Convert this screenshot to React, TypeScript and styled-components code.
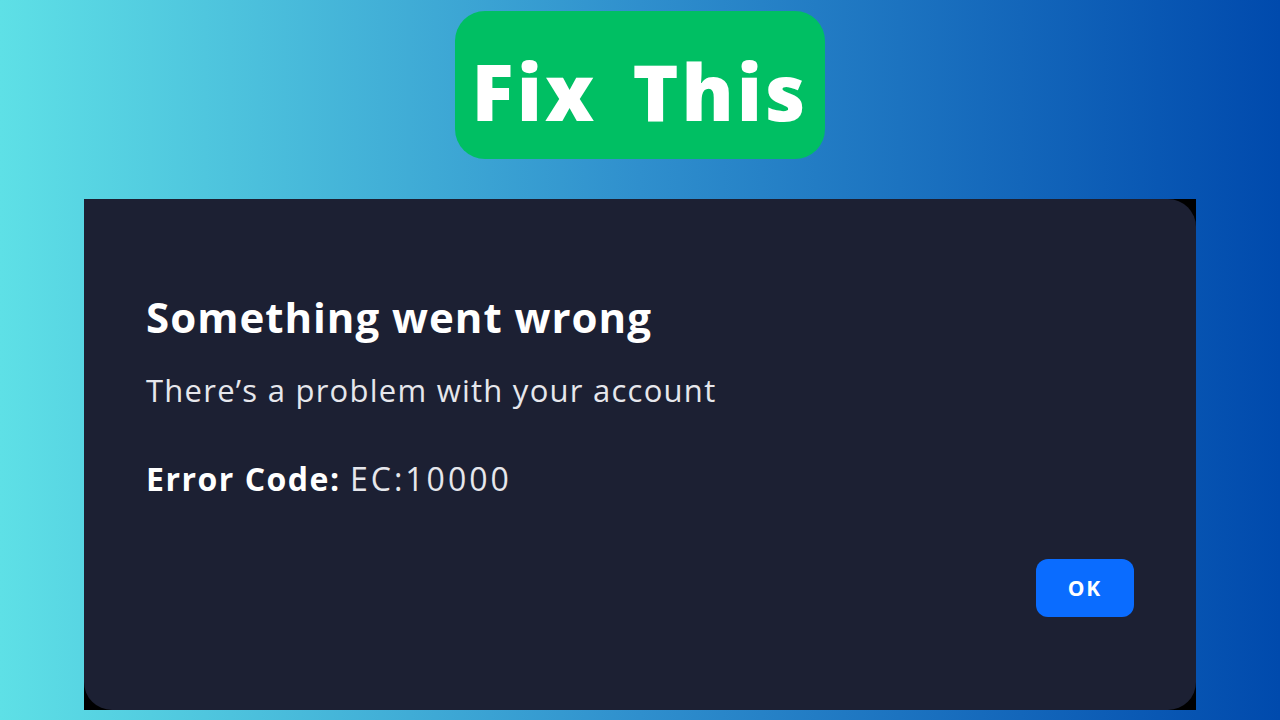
import styled, { createGlobalStyle } from 'styled-components';

const GlobalStyle = createGlobalStyle`
  html, body {
    margin: 0;
    padding: 0;
  }
  body {
    width: 1280px;
    height: 720px;
    overflow: hidden;
    background: linear-gradient(90deg, #5ee0e6 0%, #2f8fcd 50%, #004aad 100%);
    font-family: 'Open Sans', 'Noto Sans', sans-serif;
  }
`;

const Page = styled.div`
  width: 1280px;
  height: 720px;
  display: flex;
  flex-direction: column;
  align-items: center;
  padding-top: 11px;
  box-sizing: border-box;
`;

const Badge = styled.div`
  width: 370px;
  height: 148px;
  box-sizing: border-box;
  padding-top: 12px;
  border-radius: 30px;
  background: #00bf63;
  display: flex;
  align-items: center;
  justify-content: center;
  color: #ffffff;
  font-family: 'Open Sans', 'Noto Sans', sans-serif;
  font-weight: 800;
  font-size: 78px;
  letter-spacing: 3px;
  word-spacing: 12px;
`;

const Frame = styled.div`
  margin-top: 40px;
  width: 1112px;
  height: 511px;
  background: #000000;
  display: flex;
`;

const Panel = styled.div`
  flex: 1;
  background: #1c2033;
  border-radius: 0 28px 28px 28px;
  padding: 92px 62px 0 62px;
  display: flex;
  flex-direction: column;
`;

const Title = styled.h1`
  margin: 0;
  color: #ffffff;
  font-size: 42px;
  font-weight: 700;
  line-height: 52px;
  letter-spacing: 1px;
`;

const Message = styled.p`
  margin: 27px 0 0;
  color: #e6e7ec;
  font-size: 31px;
  font-weight: 400;
  line-height: 40px;
  letter-spacing: 1.25px;
`;

const Code = styled.p`
  margin: 49px 0 0;
  color: #e6e7ec;
  font-size: 32px;
  line-height: 40px;
  letter-spacing: 1px;

  strong {
    color: #ffffff;
    font-weight: 700;
    letter-spacing: 1.5px;
  }

  span {
    letter-spacing: 3px;
  }
`;

const Actions = styled.div`
  display: flex;
  justify-content: flex-end;
  margin-top: 60px;
`;

const OkButton = styled.button`
  width: 98px;
  height: 58px;
  border: none;
  border-radius: 12px;
  background: #0a6cff;
  color: #ffffff;
  font-family: 'Open Sans', 'Noto Sans', sans-serif;
  font-weight: 700;
  font-size: 21px;
  letter-spacing: 2px;
`;

export default function App() {
  return (
    <>
      <GlobalStyle />
      <Page>
        <Badge>Fix This</Badge>
        <Frame>
          <Panel>
            <Title>Something went wrong</Title>
            <Message>There’s a problem with your account</Message>
            <Code>
              <strong>Error Code:</strong> <span>EC:10000</span>
            </Code>
            <Actions>
              <OkButton>OK</OkButton>
            </Actions>
          </Panel>
        </Frame>
      </Page>
    </>
  );
}
